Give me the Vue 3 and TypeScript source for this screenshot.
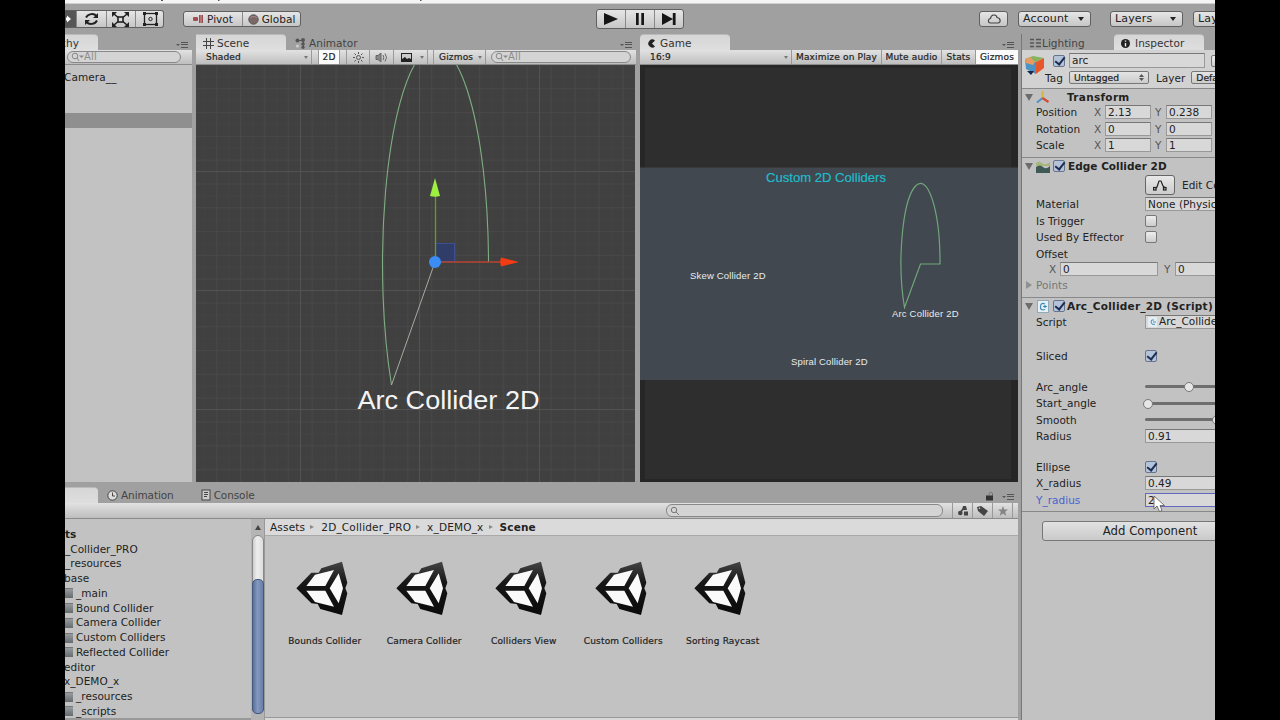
<script setup lang="ts">
interface TreeItem {
  label: string
  folder?: boolean
  bold?: boolean
  shifted?: boolean
}

const tree: TreeItem[] = [
  { label: 'ts', bold: true },
  { label: '_Collider_PRO' },
  { label: '_resources' },
  { label: 'base', shifted: true },
  { label: '_main', folder: true },
  { label: 'Bound Collider', folder: true },
  { label: 'Camera Collider', folder: true },
  { label: 'Custom Colliders', folder: true },
  { label: 'Reflected Collider', folder: true },
  { label: 'editor', shifted: true },
  { label: 'x_DEMO_x', shifted: true },
  { label: '_resources', folder: true },
  { label: '_scripts', folder: true },
]

const crumbs: string[] = ['Assets', '2D_Collider_PRO', 'x_DEMO_x']
const assets: string[] = ['Bounds Collider', 'Camera Collider', 'Colliders View', 'Custom Colliders', 'Sorting Raycast']

const transform = [
  { label: 'Position', x: '2.13', y: '0.238' },
  { label: 'Rotation', x: '0', y: '0' },
  { label: 'Scale', x: '1', y: '1' },
]

const sliders = [
  { label: 'Arc_angle', at: 44 },
  { label: 'Start_angle', at: 3 },
  { label: 'Smooth', at: 72 },
]
</script>

<template>
  <div class="screen">
    <div class="editor">
      <div class="titlebar"><svg width="400" height="2" viewBox="0 0 400 2"><path d="M96 .5h2M153 .5h1.500M355 .5h1.500" stroke="#555" /></svg></div>
      <header class="toolbar">
        <div class="group tools">
          <span class="btn active"><svg width="10" height="16" viewBox="0 0 10 16"><path d="M-2 6.500h3V4.500l4 3.500-4 3.500v-2h-3z" fill="#fff" /></svg></span>
          <span class="btn"><svg width="15" height="14" viewBox="0 0 15 14" fill="none" stroke="#222" stroke-width="2"><path d="M2 5.500C4 1.500 10 1 12.500 4M13 8.500C11 12.500 5 13 2.500 10" /><path d="M14 1v5H9zM1 13V8h5z" fill="#222" stroke="none" /></svg></span>
          <span class="btn"><svg width="17" height="15" viewBox="0 0 17 15"><path d="M2 2l13 11M15 2L2 13" stroke="#222" stroke-width="1.600" /><path d="M0 0h5L0 5zM17 0h-5l5 5zM0 15h5l-5-5zM17 15h-5l5-5z" fill="#222" /><rect x="6" y="5" width="5" height="5" fill="#ddd" stroke="#222" stroke-width="1.600" /></svg></span>
          <span class="btn"><svg width="17" height="16" viewBox="0 0 17 16" fill="none" stroke="#222"><rect x="2.500" y="2.500" width="12" height="11" stroke-width="1.300" /><circle cx="8.500" cy="8" r="1.700" /><path d="M1 1h3v3H1zM13 1h3v3h-3zM1 12h3v3H1zM13 12h3v3h-3z" fill="#222" stroke="none" /></svg></span>
        </div>
        <div class="group pivot">
          <span class="btn first"><svg width="11" height="8" viewBox="0 0 11 8"><rect x="0" y="2" width="5" height="4" rx="1" fill="#a44c50" /><rect x="6" y="0" width="4" height="8" fill="#954e52" /><path d="M8 0v8" stroke="#c99" /></svg>Pivot</span>
          <span class="btn"><svg width="11" height="11" viewBox="0 0 11 11"><circle cx="5.500" cy="5.500" r="4.700" fill="#7b6668" stroke="#555" /><path d="M2 4c2-2 5-2 7 0" stroke="#b09090" fill="none" /></svg>Global</span>
        </div>
        <div class="group play">
          <span class="btn"><svg width="14" height="12" viewBox="0 0 14 12"><path d="M0 0l14 6-14 6z" fill="#161616" /></svg></span>
          <span class="btn"><svg width="8" height="12" viewBox="0 0 8 12"><path d="M0 0h2.700v12H0zM5.300 0H8v12H5.300z" fill="#161616" /></svg></span>
          <span class="btn"><svg width="14" height="12" viewBox="0 0 14 12"><path d="M0 0l11 6-11 6zM10.800 0h2.800v12h-2.800z" fill="#161616" /></svg></span>
        </div>
        <div class="group cloud"><span class="btn"><svg width="14" height="10" viewBox="0 0 14 10"><path d="M3 9a2.300 2.300 0 0 1 .5-4.500C4 0 9.500 0 10 3.500 14 4 14 9 11 9z" fill="none" stroke="#444" stroke-width="1.200" /></svg></span></div>
        <div class="group drop account"><span class="btn">Account<i class="caret"></i></span></div>
        <div class="group drop layers"><span class="btn">Layers<i class="caret"></i></span></div>
        <div class="group drop layout"><span class="btn">Layout</span></div>
      </header>

      <div class="main">
        <div class="workspace">
          <div class="views">
            <section class="panel hierarchy">
              <div class="tabs"><span class="tab on">rarchy</span><i class="menu"></i></div>
              <div class="bar"><span class="search"><svg width="13" height="10" viewBox="0 0 13 10" fill="none" stroke="#888"><circle cx="4" cy="4" r="2.800" /><path d="M6 6l2 3" /><path d="M8 3.500h5L10.500 6z" fill="#888" stroke="none" /></svg>All</span></div>
              <div class="objects"><span class="camera">Camera__</span><div class="selected"></div></div>
            </section>

            <section class="panel scene">
              <div class="tabs">
                <span class="tab on"><svg width="11" height="11" viewBox="0 0 11 11" stroke="#444"><path d="M3.500 0v11M7.500 0v11M0 3.500h11M0 7.500h11" /></svg>Scene</span>
                <span class="tab"><svg width="11" height="11" viewBox="0 0 11 11" fill="#555"><circle cx="2.500" cy="2.500" r="2" /><circle cx="8" cy="2" r="2" /><circle cx="8" cy="6" r="1.800" /><circle cx="8" cy="9.300" r="1.600" /><circle cx="2.500" cy="8" r="1.600" fill="#ccc" /><path d="M2.500 2.500h6v7" fill="none" stroke="#555" /></svg>Animator</span>
                <i class="menu"></i>
              </div>
              <div class="bar">
                <span class="item shaded">Shaded<i class="caret small"></i></span>
                <span class="item two on">2D</span>
                <span class="item sun"><svg width="11" height="11" viewBox="0 0 11 11" stroke="#555" fill="none"><circle cx="5.500" cy="5.500" r="2" /><path d="M5.500 0v2M5.500 9v2M0 5.500h2M9 5.500h2M1.500 1.500l1.500 1.500M8 8l1.500 1.500M9.500 1.500L8 3M3 8L1.500 9.500" /></svg></span>
                <span class="item sound"><svg width="13" height="11" viewBox="0 0 13 11" stroke="#666" fill="none"><path d="M1 3.500h2L6 1v9L3 7.500H1z" fill="#888" /><path d="M8 3q1.500 2.500 0 5M10 1.500q3 4 0 8" /></svg></span>
                <span class="item image"><svg width="11" height="9" viewBox="0 0 11 9"><rect x=".5" y=".5" width="10" height="8" fill="#ccc" stroke="#222" /><path d="M1 6l3-2 2 2 2-1 2 1v2H1z" fill="#222" /></svg><i class="caret small"></i></span>
                <span class="item giz">Gizmos<i class="caret small"></i></span>
                <span class="search"><svg width="13" height="10" viewBox="0 0 13 10" fill="none" stroke="#888"><circle cx="4" cy="4" r="2.800" /><path d="M6 6l2 3" /><path d="M8 3.500h5L10.500 6z" fill="#888" stroke="none" /></svg>All</span>
              </div>
              <svg class="canvas" width="439" height="417" viewBox="196 65 439 417">
                <defs>
                  <pattern id="fine" x="300" y="171.500" width="11.950" height="11.900" patternUnits="userSpaceOnUse"><path d="M.5 0v12M0 .5h12" stroke="#fff" stroke-opacity=".012" /></pattern>
                  <pattern id="mid" x="311.500" y="183.500" width="23.900" height="23.800" patternUnits="userSpaceOnUse"><path d="M.5 0v24M0 .5h24" stroke="#fff" stroke-opacity=".03" /></pattern>
                </defs>
                <rect x="196" y="65" width="439" height="417" fill="#404040" />
                <rect x="196" y="65" width="439" height="417" fill="url(#fine)" />
                <rect x="196" y="65" width="439" height="417" fill="url(#mid)" />
                <path d="M300.500 65v417M419.500 65v417M539.500 65v417M196 171.500h439M196 290.500h439M196 409.500h439" stroke="#525252" />
                <path d="M488.500 262A53 217 0 1 0 391.500 385" fill="none" stroke="#7fae82" stroke-width="1.100" />
                <path d="M391.500 385L435 262" stroke="#a3ada0" />
                <rect x="435.500" y="243.500" width="19" height="18" fill="#303d68" stroke="#3c4f91" />
                <path d="M435.500 262v-67" stroke="#66962f" stroke-width="1.400" />
                <path d="M435 262h67" stroke="#b64430" stroke-width="1.400" />
                <path d="M430 196q5 1.500 10 0l-5-18z" fill="#9df03f" />
                <path d="M501 257.500q-1.500 4.500 0 9l18-4.500z" fill="#f43b14" />
                <circle cx="435" cy="262" r="6" fill="#3b8cf5" />
                <text x="357.500" y="409" font-size="26.500" fill="#f4f4f4" textLength="182" lengthAdjust="spacingAndGlyphs">Arc Collider 2D</text>
              </svg>
            </section>

            <section class="panel game">
              <div class="tabs">
                <span class="tab on"><svg width="9" height="9" viewBox="0 0 9 9"><path d="M8 1.500A4 4 0 1 0 8 7.500L5 4.500z" fill="#222" /></svg>Game</span>
                <i class="menu"></i>
              </div>
              <div class="bar">
                <span class="item ratio">16:9<i class="caret small"></i></span>
                <span class="item max">Maximize on Play</span>
                <span class="item mute">Mute audio</span>
                <span class="item stats">Stats</span>
                <span class="item gg on">Gizmos</span>
              </div>
              <svg class="canvas" width="378" height="417" viewBox="640 65 378 417">
                <rect x="640" y="65" width="378" height="417" fill="#262626" />
                <rect x="645" y="68" width="366" height="411" fill="#2e2e2e" />
                <rect x="640" y="167.500" width="378" height="212.500" fill="#41484f" />
                <text x="766" y="182" font-size="12.800" fill="#20bccb" stroke="#20bccb" stroke-width=".2" textLength="120" lengthAdjust="spacingAndGlyphs">Custom 2D Colliders</text>
                <path d="M920.500 264H940A19.500 79 0 1 0 904.500 307.500z" fill="none" stroke="#72a57c" stroke-width="1.200" />
                <g font-size="9.500" fill="#e8ecee">
                  <text x="690" y="279" textLength="75.500">Skew Collider 2D</text>
                  <text x="892" y="317" textLength="66.500">Arc Collider 2D</text>
                  <text x="791" y="365" textLength="76.500">Spiral Collider 2D</text>
                </g>
              </svg>
            </section>
          </div>

          <section class="project">
            <div class="tabs">
              <span class="tab on blank"></span>
              <span class="tab"><svg width="11" height="11" viewBox="0 0 11 11" fill="#ddd" stroke="#444"><circle cx="5.500" cy="5.500" r="4.700" /><path d="M5.500 2.500v3.500H8" fill="none" /></svg>Animation</span>
              <span class="tab console"><svg width="10" height="12" viewBox="0 0 10 12" fill="#ccc" stroke="#444"><rect x="1" y="1" width="8" height="10" /><path d="M3 3.500h4M3 5.500h4M3 7.500h3" /></svg>Console</span>
              <svg class="lock" width="8" height="10" viewBox="0 0 8 10"><path d="M3 4V2.500Q5 0 6.500 2V5" stroke="#777" fill="none" /><rect x="0" y="4.500" width="7" height="5" fill="#333" /></svg>
              <i class="menu"></i>
            </div>
            <div class="bar">
              <span class="search"><svg width="10" height="10" viewBox="0 0 10 10" fill="none" stroke="#777"><circle cx="4" cy="4" r="2.700" /><path d="M6 6l3 3" /></svg></span>
              <span class="item filter"><svg width="10" height="10" viewBox="0 0 10 10" fill="#444"><path d="M5 0l3 0 1 4-5 0z" /><path d="M5 3L2 7" stroke="#444" stroke-width="1.500" /><circle cx="2.300" cy="7" r="2.300" /><rect x="6" y="5.500" width="4" height="4" /></svg></span>
              <span class="item filter"><svg width="11" height="10" viewBox="0 0 11 10"><path d="M0 1l4-1 7 5-4 5-6-5z" fill="#444" /><circle cx="2.500" cy="2.300" r=".8" fill="#ddd" /></svg></span>
              <span class="item filter"><svg width="10" height="10" viewBox="0 0 10 10"><path d="M5 0l1.300 3.500H10L7.200 5.800 8.200 9.700 5 7.400 1.800 9.700 2.800 5.800 0 3.500h3.700z" fill="#858585" /></svg></span>
              <span class="item end"></span>
            </div>
            <div class="content">
              <ul class="tree">
                <li v-for="(item, i) in tree" :key="i" :class="{ bold: item.bold, shifted: item.shifted }">
                  <i v-if="item.folder" class="folder"></i>{{ item.label }}
                </li>
              </ul>
              <div class="scroll"><i class="up"></i><div class="track"><div class="thumb"></div></div></div>
              <div class="assets">
                <div class="crumbs"><template v-for="c in crumbs" :key="c"><span>{{ c }}</span><i></i></template><b>Scene</b></div>
                <div class="grid">
                  <figure v-for="name in assets" :key="name">
                    <svg width="52" height="55" viewBox="49 153 156 165">
                      <defs><linearGradient id="shade" x1="0" y1="0" x2="0" y2="1"><stop offset="0" stop-color="#444" /><stop offset=".4" stop-color="#161616" /><stop offset="1" stop-color="#0b0b0b" /></linearGradient></defs>
                      <path d="M50 235L95 188h22l8-13 62-20 16 63-6 17 6 15-16 65-65-18-8-15-19-2z" fill="url(#shade)" />
                      <path d="M80 228l26-34 57-14-26 48zM80 242h57l26 48-57-14zM177 190l13 45-13 45-27-45z" fill="#fafafa" />
                    </svg>
                    <figcaption>{{ name }}</figcaption>
                  </figure>
                </div>
                <div class="footer"></div>
              </div>
            </div>
          </section>
        </div>

        <aside class="inspector">
          <div class="tabs">
            <span class="tab"><svg width="11" height="10" viewBox="0 0 11 10" stroke="#555" stroke-width="1.300"><path d="M0 1.500h4M6 1.500h5M0 5h4M6 5h5M0 8.500h4M6 8.500h5" /></svg>Lighting</span>
            <span class="tab on"><svg width="9" height="9" viewBox="0 0 9 9"><circle cx="4.500" cy="4.500" r="4.500" fill="#222" /><path d="M4.500 1.500v1.300M4.500 4v3.500" stroke="#eee" stroke-width="1.400" /></svg>Inspector</span>
          </div>
          <div class="object">
            <svg class="cube" width="21" height="21" viewBox="0 0 21 21"><path d="M1 4L9 1l11 2-8 4z" fill="#87b35e" /><path d="M1 4l11 3v12L2 14z" fill="#4d93c4" /><path d="M12 7l8-4v10l-8 6z" fill="#e8562b" /><path d="M1 4l5-2 5 5-2 3-7-2z" fill="#e79b62" /><path d="M3 16h7l-3 4z" fill="#16274d" /></svg>
            <div class="fields">
              <div class="line"><i class="check ticked"></i><span class="input name">arc</span><i class="check"></i></div>
              <div class="line second"><span>Tag</span><span class="popup">Untagged<svg width="5" height="7" viewBox="0 0 5 7"><path d="M0 3l2.500-3L5 3zM0 4l2.500 3L5 4z" fill="#555" /></svg></span><span>Layer</span><span class="popup def">Default</span></div>
            </div>
          </div>

          <section class="component transform">
            <div class="head"><i class="fold"></i><svg width="14" height="13" viewBox="0 0 14 13"><path d="M6.500 0v7" stroke="#d6b33c" stroke-width="2" /><path d="M6.500 7L1 11.500" stroke="#4a94c8" stroke-width="2" /><path d="M6.500 7l6 4" stroke="#d44a35" stroke-width="2.300" /></svg><b class="wide">Transform</b></div>
            <div v-for="t in transform" :key="t.label" class="row"><label>{{ t.label }}</label><em>X</em><span class="input xy">{{ t.x }}</span><em class="y">Y</em><span class="input xy">{{ t.y }}</span></div>
          </section>

          <section class="component edge">
            <div class="head"><i class="fold"></i><svg width="14" height="13" viewBox="0 0 14 13"><path d="M0 3q3-3 6 0t8-1v4H0z" fill="#a7b67a" /><path d="M0 7q4-3 7 0t7-1v7H0z" fill="#3f5955" /></svg><i class="check ticked"></i><b>Edge Collider 2D</b></div>
            <div class="row edit"><span class="editbtn"><svg width="14" height="12" viewBox="0 0 14 12" fill="none" stroke="#222" stroke-width="1.200"><path d="M2 9l2-1L6 2h2l2 5 2 2" /><rect x=".6" y="8.500" width="2.500" height="2.500" /><rect x="10.500" y="8.500" width="2.500" height="2.500" /></svg></span>Edit Collider</div>
            <div class="row"><label>Material</label><span class="input fill">None (Physics</span></div>
            <div class="row"><label>Is Trigger</label><i class="check"></i></div>
            <div class="row"><label>Used By Effector</label><i class="check"></i></div>
            <div class="row"><label>Offset</label></div>
            <div class="row offset"><em>X</em><span class="input half">0</span><em class="y">Y</em><span class="input half">0</span></div>
            <div class="row points"><i class="fold closed"></i>Points</div>
          </section>

          <section class="component arc">
            <div class="head"><i class="fold"></i><svg width="12" height="13" viewBox="0 0 12 13"><rect x=".5" y=".5" width="11" height="12" fill="#e6f0f5" stroke="#91aab9" /><path d="M8 4Q4 2 3.500 6.500T8 9.500M6 6.500h4M8 5v3" stroke="#3e8cba" stroke-width="1.200" fill="none" /></svg><i class="check ticked"></i><b>Arc_Collider_2D (Script)</b></div>
            <div class="row"><label>Script</label><span class="input fill script"><svg width="9" height="10" viewBox="0 0 9 10"><rect width="9" height="10" fill="#e4edf2" /><path d="M6 3Q3 2 3 5t4 2.500M5 5h3" stroke="#4a93c0" fill="none" /></svg>Arc_Collider_2D</span></div>
            <div class="row sliced"><label>Sliced</label><i class="check ticked"></i></div>
            <div class="sliders">
              <div v-for="s in sliders" :key="s.label" class="row"><label>{{ s.label }}</label><span class="slider"><i :style="{ left: s.at - 5 + 'px' }"></i></span></div>
            </div>
            <div class="row"><label>Radius</label><span class="input fill">0.91</span></div>
            <div class="row ellipse"><label>Ellipse</label><i class="check ticked"></i></div>
            <div class="row"><label>X_radius</label><span class="input fill">0.49</span></div>
            <div class="row focused"><label>Y_radius</label><span class="input fill">2</span></div>
          </section>
          <div class="addwrap"><span class="add">Add Component</span></div>
        </aside>
      </div>

      <svg class="cursor" width="13" height="18" viewBox="0 0 13 18"><path d="M1 1v13l3-3 2.500 5.500 2.500-1L7 10.500h4.500z" fill="#fff" stroke="#555" stroke-width=".8" /></svg>
    </div>
  </div>
</template>

<style>
body { background: #000; }
</style>

<style scoped>
* { box-sizing: border-box; }
.screen { width: 1280px; height: 720px; background: #000; overflow: hidden; }
.editor { position: relative; width: 1150px; height: 720px; margin-left: 65px; overflow: hidden; background: #a0a0a0; color: #222; font: 10.5px/14px "DejaVu Sans", Verdana, sans-serif; letter-spacing: .03px; white-space: nowrap; display: flex; flex-direction: column; }
.editor svg { flex: none; display: block; }
.titlebar { height: 4px; flex: none; background: #f4f4f4; border-bottom: 1px solid #d0d0d0; }
.toolbar { height: 30px; flex: none; display: flex; align-items: center; }
.group { display: flex; height: 18px; flex: none; border: 1px solid #606060; border-radius: 3px; background: linear-gradient(#e6e6e6, #c6c6c6); overflow: hidden; }
.btn { flex: 1; display: flex; align-items: center; justify-content: center; gap: 3px; border-left: 1px solid #888; }
.btn:first-child { border-left: 0; }
.tools { width: 99px; border-left: 0; border-radius: 0 3px 3px 0; }
.tools .btn { flex: none; width: 29.500px; }
.tools .btn.active { width: 11px; background: #565656; }
.pivot { width: 118px; height: 16px; margin-left: 19px; }
.pivot .first { flex: none; width: 58px; }
.play { width: 88px; height: 20px; margin-left: 295px; }
.cloud { width: 29px; height: 16px; margin-left: 295px; }
.drop { height: 16px; }
.drop .btn { justify-content: flex-start; padding-left: 4px; font-size: 11px; letter-spacing: .15px; }
.account { width: 73px; margin-left: 10px; }
.layers { width: 73px; margin-left: 19px; }
.layout { width: 73px; margin-left: 10px; }
.caret { border: 3px solid transparent; border-top: 4px solid #222; border-bottom: 0; margin-left: auto; margin-right: 6px; }
.caret.small { border-width: 3px 2.500px 0; border-top-color: #777; margin-right: 3px; }

.main { flex: 1; min-height: 0; display: flex; }
.workspace { width: 953px; flex: none; display: flex; flex-direction: column; }
.views { height: 448px; display: flex; gap: 4px; flex: none; }
.panel { display: flex; flex-direction: column; flex: none; }
.hierarchy { width: 127px; }
.scene { width: 440px; }
.game { width: 378px; }
.tabs { height: 16px; display: flex; flex: none; align-items: stretch; }
.tab { display: flex; align-items: center; gap: 3px; color: #444; padding-top: 2px; flex: none; }
.tab.on { background: linear-gradient(#d6d6d6, #dedede); color: #333; border-radius: 0 4px 0 0; border-top: 1px solid #bbb; padding-top: 1px; }
.hierarchy .tab.on { width: 33px; justify-content: flex-end; padding-right: 19px; overflow: hidden; }
.scene .tab.on { width: 90px; padding-left: 7px; }
.scene .tab + .tab { margin-left: 9px; }
.game .tab.on { width: 90px; padding-left: 7px; gap: 4px; border-radius: 4px 4px 0 0; }
.menu { width: 7px; height: 6px; margin: 8px 4px 0 auto; border: solid #555; border-width: 1px 0; background: linear-gradient(transparent 1px, #555 1px, #555 2px, transparent 2px); position: relative; }
.menu::before { content: ""; position: absolute; left: -5px; top: 1px; border: 2px solid transparent; border-top-color: #555; }
.bar { height: 15px; flex: none; display: flex; align-items: stretch; background: linear-gradient(#e2e2e2, #bebebe); border-bottom: 1px solid #8b8b8b; font-size: 9px; line-height: 14px; letter-spacing: .17px; -webkit-text-stroke: .2px; }
.search { display: flex; align-items: center; height: 12px; margin-top: 1px; border: 1px solid #888; border-radius: 6px; background: #d4d4d4; color: #8c8c8c; padding-left: 3px; font-size: 10px; line-height: 10px; -webkit-text-stroke: 0; }
.hierarchy .search { width: 114px; margin-left: 2px; }
.item { display: flex; align-items: center; justify-content: center; border-right: 1px solid #999; flex: none; color: #222; }
.item.on { background: #fafafa; }
.shaded { width: 116px; justify-content: flex-start; padding-left: 10px; }
.two { width: 22px; margin-left: 6px; border-left: 1px solid #999; }
.sun { width: 24px; margin-left: 6px; border-left: 1px solid #999; }
.sound { width: 24px; }
.image { width: 34px; padding-left: 7px; margin-right: 5px; }
.giz { width: 53px; padding-left: 5px; border-left: 1px solid #999; }
.scene .search { width: 140px; margin-left: 5px; }
.ratio { width: 152px; justify-content: flex-start; padding-left: 10px; }
.max { width: 90px; }
.mute { width: 60px; }
.stats { width: 34px; }
.gg { width: 42px; border: 0; }
.canvas { font-family: "Liberation Sans", Arial, sans-serif; letter-spacing: 0; }
.objects { flex: 1; background: #c2c2c2; padding-top: 5px; }
.camera { display: block; margin-left: -1px; height: 14px; letter-spacing: .1px; }
.selected { height: 15px; margin-top: 29px; background: #8f8f8f; }

.project { flex: 1; min-height: 0; display: flex; flex-direction: column; padding-top: 5px; }
.project .tabs { letter-spacing: -.1px; }
.project .tab { padding-top: 0; }
.project .tab.blank { width: 33px; margin-right: 9px; }
.project .console { margin-left: 27px; }
.project .lock { margin: 4px 8px 0 auto; }
.project .menu { margin-top: 7px; margin-left: 5px; }
.project .bar { height: 16px; }
.project .search { width: 277px; height: 13px; margin-left: 601px; margin-right: 9px; }
.filter { width: 20px; border-right: 0; border-left: 1px solid #999; }
.item.end { flex: 1; border-left: 1px solid #999; border-right: 0; }
.content { flex: 1; min-height: 0; display: flex; background: #c2c2c2; }
.tree { list-style: none; margin: 0; padding: 8px 0 0; width: 186px; flex: none; overflow: hidden; border-bottom: 2px solid #999; }
.tree li { height: 14.750px; line-height: 15px; display: flex; align-items: center; }
.tree .bold { font-weight: bold; }
.tree .shifted { margin-left: -1px; }
.folder { width: 8px; height: 10px; margin-right: 3px; background: linear-gradient(#959b9e, #666b6e); border-top: 1px solid #777; }
.scroll { width: 13px; flex: none; background: #b4b4b4; display: flex; flex-direction: column; align-items: center; padding-bottom: 6px; }
.up { border: 3.500px solid transparent; border-top: 0; border-bottom: 5px solid #444; margin: 6px 0 5px; }
.track { width: 12px; flex: 1; border-radius: 6px; border: 1px solid #888; background: linear-gradient(90deg, #ccc, #eee 40%, #ddd); display: flex; }
.thumb { flex: 1; margin: 43px -1px -1px; border: 1px solid #43587f; border-radius: 5px; background: linear-gradient(90deg, #596f99, #8499c0 45%, #687ea8); }
.assets { flex: 1; border-left: 1px solid #999; display: flex; flex-direction: column; }
.crumbs { height: 17px; display: flex; align-items: center; padding-left: 5px; background: #dadada; border-bottom: 1px solid #aaa; flex: none; letter-spacing: .18px; }
.crumbs i { border: 2.500px solid transparent; border-left: 4px solid #888; border-right: 0; margin: 0 7px 0 5px; }
.grid { display: flex; padding: 25px 0 0 10px; flex: 1; }
figure { margin: 0; width: 99.500px; display: flex; flex-direction: column; align-items: center; }
figure svg { margin-left: -5px; }
figcaption { margin-top: 18px; font-size: 9px; line-height: 14px; letter-spacing: .17px; -webkit-text-stroke: .2px; }
.footer { height: 3px; background: #d8d8d8; border-top: 1px solid #999; }

.inspector { width: 194px; margin-left: 3px; flex: none; background: #c2c2c2; display: flex; flex-direction: column; border-left: 1px solid #777; }
.inspector .tabs { height: 16px; background: #a0a0a0; padding-left: 8px; }
.inspector .tab.on { margin-left: 4px; width: 90px; padding-left: 7px; gap: 5px; border-radius: 4px 4px 0 0; }
.inspector .tab:first-child { width: 80px; gap: 1px; }
.object { height: 38px; display: flex; background: #d2d2d2; padding-top: 2px; flex: none; }
.cube { margin: 3px 0 0 2px; }
.fields { margin-left: 8px; flex: none; }
.line { display: flex; align-items: center; height: 17px; }
.check { width: 12px; height: 12px; flex: none; border: 1px solid #777; border-radius: 2px; background: linear-gradient(#eee, #ccc); position: relative; }
.check.ticked { background: #b4c3d9; border-color: #67748d; }
.check.ticked::after { content: ""; position: absolute; left: 3px; top: -1px; width: 4px; height: 8px; border: solid #1c2c52; border-width: 0 2px 2px 0; transform: rotate(38deg); }
.input { display: block; height: 14px; line-height: 13px; border: 1px solid #999; border-top-color: #777; background: #d8d8d8; padding-left: 2px; overflow: hidden; flex: none; }
.name { width: 136px; height: 15px; margin: 0 6px 0 4px; }
.second { margin-left: -8px; }
.popup { display: flex; align-items: center; justify-content: space-between; width: 80px; height: 13px; border: 1px solid #777; border-radius: 2px; background: linear-gradient(#e4e4e4, #ccc); padding: 0 4px; margin: 0 7px 0 6px; font-size: 9.200px; flex: none; -webkit-text-stroke: .2px; }
.popup.def { margin-left: 6px; }
.component { border-top: 1px solid #888; height: 69px; flex: none; }
.edge { height: 140px; }
.arc { height: 214px; }
.head { height: 16px; display: flex; align-items: center; padding-left: 3px; }
.transform .head { margin-bottom: -1px; }
.arc .head { margin-bottom: -.500px; }
.head svg { margin-left: 3px; }
.head .check { margin-left: 3px; }
.arc .head .check, .arc .head svg { margin-left: 4px; }
.head b { margin-left: 3px; }
.arc .head b { margin-left: 2px; letter-spacing: .25px; }
.head b.wide { margin-left: 17px; letter-spacing: .3px; }
.fold { border: 4px solid transparent; border-top: 7px solid #6c6c6c; border-bottom: 0; flex: none; }
.fold.closed { border: 4px solid transparent; border-left: 6px solid #909090; border-right: 0; }
.row { height: 16.500px; display: flex; align-items: center; padding-left: 14px; }
.row label { width: 109px; flex: none; }
em { font-style: normal; color: #555; }
.row em { width: 11px; flex: none; }
.transform .row label { width: 58px; }
.xy { width: 46px; }
.row em.y { margin-left: 6px; }
.transform .row em.y { margin-left: 4px; }
.row.edit { height: 22px; padding-left: 123px; gap: 7px; }
.editbtn { width: 30px; height: 20px; border: 1px solid #666; border-radius: 3px; background: linear-gradient(#e8e8e8, #ccc); display: flex; align-items: center; justify-content: center; flex: none; }
.fill { width: 90px; }
.row.offset { height: 15px; padding-left: 27px; margin: -1px 0 1px; }
.half { width: 98px; }
.row.points { padding-left: 4px; gap: 4px; color: #777; }
.script { display: flex; align-items: center; gap: 2px; }
.sliced { margin-top: 18px; }
.sliders { margin-top: 14px; }
.slider { width: 90px; height: 3px; border-radius: 2px; background: #6e6e6e; position: relative; flex: none; }
.slider i { position: absolute; top: -3px; width: 10px; height: 10px; border: 1px solid #777; border-radius: 50%; background: #e6e6e6; }
.ellipse { margin-top: 14px; }
.focused label { color: #4763d0; }
.focused .input { border: 1.500px solid #6468c4; }
.addwrap { border-top: 1px solid #888; padding: 9px 0 0 20px; overflow: hidden; flex: 1; }
.add { display: flex; align-items: center; justify-content: center; width: 216px; height: 20px; border: 1px solid #777; border-radius: 3px; background: linear-gradient(#e2e2e2, #cacaca); font-size: 11.700px; }
.cursor { position: absolute; left: 1088px; top: 495px; }
</style>
